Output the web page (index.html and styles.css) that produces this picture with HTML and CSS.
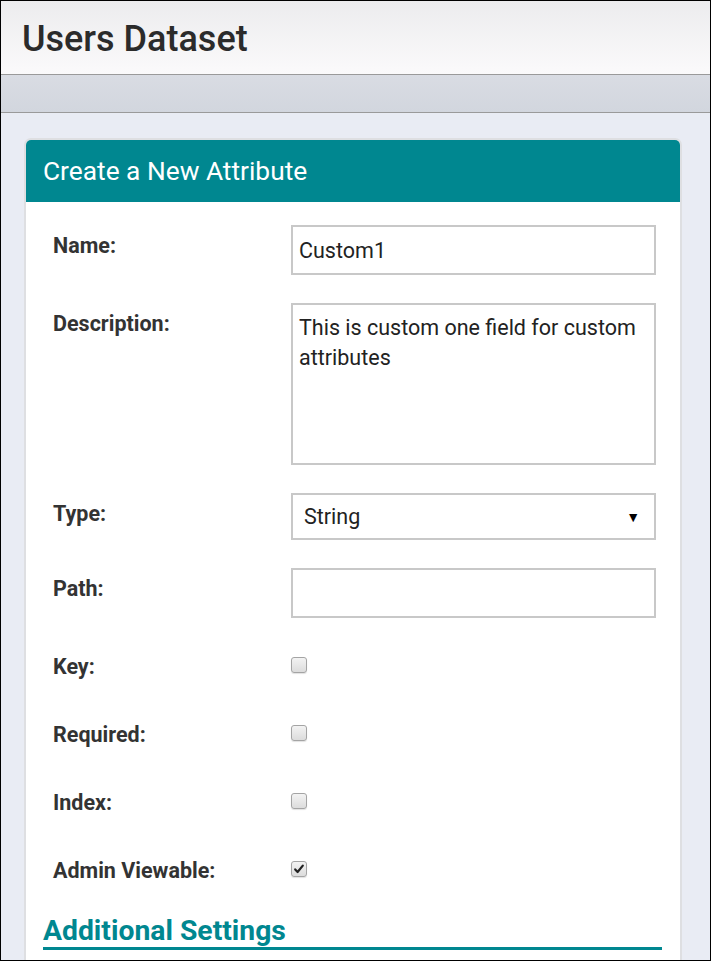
FILE: index.html
```html
<!DOCTYPE html>
<html lang="en">
<head>
<meta charset="utf-8">
<title>Users Dataset</title>
<link rel="stylesheet" href="styles.css">
</head>
<body>
<div class="frame">
  <header class="page-header">
    <h1 class="page-title">Users Dataset</h1>
  </header>
  <div class="toolbar"></div>
  <main class="main">
    <section class="card">
      <div class="card-header">
        <h2 class="card-title">Create a New Attribute</h2>
      </div>
      <div class="card-body">
        <div class="row">
          <label class="label">Name:</label>
          <div class="field">Custom1</div>
        </div>
        <div class="row">
          <label class="label">Description:</label>
          <div class="field textarea">This is custom one field for custom attributes</div>
        </div>
        <div class="row">
          <label class="label">Type:</label>
          <div class="field select"><span>String</span><span class="arrow">▼</span></div>
        </div>
        <div class="row">
          <label class="label">Path:</label>
          <div class="field"></div>
        </div>
        <div class="row check-row">
          <label class="label">Key:</label>
          <div><span class="checkbox"></span></div>
        </div>
        <div class="row check-row">
          <label class="label">Required:</label>
          <div><span class="checkbox"></span></div>
        </div>
        <div class="row check-row">
          <label class="label">Index:</label>
          <div><span class="checkbox"></span></div>
        </div>
        <div class="row check-row">
          <label class="label">Admin Viewable:</label>
          <div><span class="checkbox checked"><svg viewBox="0 0 12 12" width="12" height="12"><path d="M2.2 6.4 L4.6 9 L9.8 2.6" fill="none" stroke="#222" stroke-width="2.2" stroke-linecap="round" stroke-linejoin="round"/></svg></span></div>
        </div>
        <h3 class="section-title">Additional Settings</h3>
      </div>
    </section>
  </main>
</div>
</body>
</html>
```
FILE: styles.css
```css
html, body {
  margin: 0;
  padding: 0;
}
body {
  font-family: Roboto, "Liberation Sans", sans-serif;
  background: #fff;
}
.frame {
  width: 711px;
  height: 961px;
  box-sizing: border-box;
  border: 1px solid #000;
  background: #e9ecf4;
  overflow: hidden;
}
.page-header {
  height: 73px;
  border-bottom: 1px solid #9a9a9a;
  background: linear-gradient(#ececee, #fbfafb);
  display: flex;
  align-items: center;
  padding-left: 21px;
}
.page-title {
  margin: 0;
  font-size: 36px;
  font-weight: 500;
  color: #2b2b2b;
  line-height: 1;
  padding-top: 2px;
}
.toolbar {
  height: 37px;
  border-bottom: 1px solid #9a9a9a;
  background: linear-gradient(#d9dce3, #d2d6de);
}
.main {
  padding: 25px 28px 0 23px;
}
.card {
  border: 2px solid #dedfe2;
  border-bottom: none;
  border-radius: 7px 7px 0 0;
  background: #fff;
  overflow: hidden;
}
.card-header {
  height: 62px;
  background: #008790;
  display: flex;
  align-items: center;
  padding-left: 17px;
}
.card-title {
  margin: 0;
  font-size: 26.3px;
  font-weight: 400;
  color: #fff;
}
.card-body {
  padding: 23px 18px 60px 17px;
}
.row {
  display: grid;
  grid-template-columns: 238px 365px;
  padding-left: 10px;
  margin-bottom: 28px;
}
.label {
  font-size: 21.5px;
  font-weight: 700;
  color: #333;
  line-height: 24px;
  padding-top: 9px;
}
.field {
  box-sizing: border-box;
  height: 50px;
  border: 2px solid #c8c8c8;
  font-size: 21.5px;
  color: #222;
  padding: 0 6px;
  display: flex;
  align-items: center;
}
.textarea {
  height: 162px;
  align-items: flex-start;
  line-height: 30px;
  padding-top: 8px;
}
.select {
  height: 47px;
  justify-content: space-between;
  padding: 0 14px 0 11px;
}
.arrow {
  font-size: 14px;
  color: #000;
}
.check-row {
  height: 40px;
}
.checkbox {
  display: flex;
  align-items: center;
  justify-content: center;
  box-sizing: border-box;
  width: 16px;
  height: 16px;
  margin-top: 11px;
  border: 1px solid #a4a4a4;
  border-radius: 3px;
  background: linear-gradient(#f3f3f3, #dcdcdc);
  box-shadow: 0 1px 1px rgba(0, 0, 0, 0.12);
}
.section-title {
  margin: 0;
  font-size: 28.3px;
  font-weight: 700;
  color: #008790;
  line-height: 32px;
  border-bottom: 3px solid #008790;
  margin-top: -3px;
}
```
